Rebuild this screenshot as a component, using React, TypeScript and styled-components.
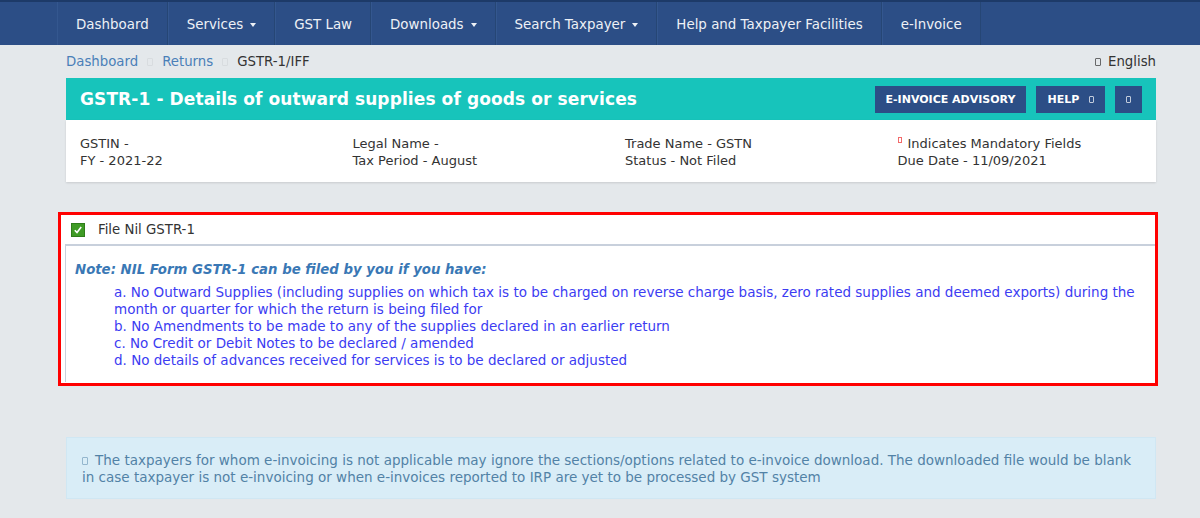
import React from 'react'
import styled, { createGlobalStyle } from 'styled-components'

const GlobalStyle = createGlobalStyle`
  html, body {
    margin: 0;
    padding: 0;
    background: #e4e8eb;
    font-family: 'DejaVu Sans', Verdana, sans-serif;
    font-size: 13.3px;
    color: #333;
  }
  * { box-sizing: border-box; }
`

const Page = styled.div`
  width: 1200px;
  min-height: 518px;
  overflow: hidden;
`

const NavBar = styled.nav`
  height: 45px;
  background: #2c4e86;
  border-top: 2px solid #1d3a68;
  display: flex;
  padding-left: 57px;
`

const NavItem = styled.div`
  display: flex;
  align-items: center;
  gap: 7px;
  padding: 1px 18px 0;
  color: #eef1f6;
  font-size: 13.4px;
  border-right: 1px solid #264675;
  border-left: 1px solid #34578f;
`

const Caret = styled.span`
  width: 0;
  height: 0;
  border-left: 3.5px solid transparent;
  border-right: 3.5px solid transparent;
  border-top: 4px solid #eef1f6;
  margin-top: 2px;
`

const Container = styled.div`
  width: 1090px;
  margin-left: 66px;
`

const Crumbs = styled.div`
  height: 33px;
  display: flex;
  align-items: center;
  justify-content: space-between;
`

const CrumbList = styled.div`
  display: flex;
  align-items: center;
  gap: 9px;
`

const CrumbLink = styled.span`
  color: #4a7fb8;
`

const Tofu = styled.span<{ $light?: boolean; $size?: number }>`
  display: inline-block;
  width: ${({ $size }) => ($size ? $size * 0.7 : 6)}px;
  height: ${({ $size }) => $size || 8}px;
  border: 1px solid ${({ $light }) => ($light ? '#d8dcdf' : 'currentColor')};
  border-radius: 1px;
  opacity: ${({ $light }) => ($light ? 1 : 0.7)};
`

const Lang = styled.span`
  display: flex;
  align-items: center;
  gap: 7px;
  color: #333;
`

const TitleBar = styled.div`
  height: 42px;
  background: #17c4bb;
  display: flex;
  align-items: center;
  justify-content: space-between;
  padding: 0 14px;
`

const Title = styled.h1`
  margin: 0;
  font-size: 17px;
  font-weight: bold;
  color: #fff;
  letter-spacing: 0.1px;
`

const Actions = styled.div`
  display: flex;
  gap: 10px;
`

const ActionButton = styled.button`
  height: 27px;
  background: #2c4e86;
  border: none;
  color: #fff;
  font-family: inherit;
  font-size: 11px;
  font-weight: bold;
  padding: 0 11px;
  display: flex;
  align-items: center;
  gap: 10px;
`

const InfoCard = styled.div`
  background: #fff;
  display: grid;
  grid-template-columns: repeat(4, 1fr);
  padding: 15px 0 13px;
  box-shadow: 0 1px 2px rgba(0, 0, 0, 0.12);
`

const InfoCol = styled.div`
  padding-left: 14px;
  line-height: 17px;
  font-size: 13px;
`

const Star = styled.span`
  display: inline-block;
  width: 4px;
  height: 6px;
  border: 1px solid #f26b6b;
  margin-right: 6px;
  vertical-align: 5px;
`

const Highlight = styled.div`
  margin: 30px 0 0 58px;
  width: 1100px;
  border: 3px solid #ff0000;
  background: #fff;
  padding: 0 0 1px 4px;
`

const CheckRow = styled.label`
  height: 29px;
  display: flex;
  align-items: center;
  gap: 13px;
  padding-left: 6px;
  color: #333;
`

const Check = styled.span`
  width: 14px;
  height: 14px;
  background: #3f9b25;
  border: 1px solid #2f7d1a;
  display: flex;
  align-items: center;
  justify-content: center;
`

const NotePanel = styled.div`
  border-top: 2px solid #c8d0dc;
  border-left: 1px solid #c8d0dc;
  padding: 15px 8px 13px 9px;
`

const NoteHead = styled.div`
  color: #3a78b5;
  font-weight: bold;
  font-style: italic;
  line-height: 17px;
  margin-bottom: 6px;
`

const NoteList = styled.div`
  padding-left: 39px;
  color: #3c3cf2;
  line-height: 17px;
  font-size: 13.5px;
`

const Alert = styled.div`
  margin-top: 51px;
  background: #d9edf7;
  border: 1px solid #d0e7f3;
  color: #5282a6;
  padding: 14px 15px 12px 15px;
  line-height: 17px;
  font-size: 13.5px;
`

const NAV = [
  { label: 'Dashboard' },
  { label: 'Services', caret: true },
  { label: 'GST Law' },
  { label: 'Downloads', caret: true },
  { label: 'Search Taxpayer', caret: true },
  { label: 'Help and Taxpayer Facilities' },
  { label: 'e-Invoice' },
]

const NOTES = [
  'a. No Outward Supplies (including supplies on which tax is to be charged on reverse charge basis, zero rated supplies and deemed exports) during the month or quarter for which the return is being filed for',
  'b. No Amendments to be made to any of the supplies declared in an earlier return',
  'c. No Credit or Debit Notes to be declared / amended',
  'd. No details of advances received for services is to be declared or adjusted',
]

const App = () => (
  <Page>
    <GlobalStyle />
    <NavBar>
      {NAV.map((item) => (
        <NavItem key={item.label}>
          {item.label}
          {item.caret && <Caret />}
        </NavItem>
      ))}
    </NavBar>

    <Container>
      <Crumbs>
        <CrumbList>
          <CrumbLink>Dashboard</CrumbLink>
          <Tofu $light />
          <CrumbLink>Returns</CrumbLink>
          <Tofu $light />
          <span>GSTR-1/IFF</span>
        </CrumbList>
        <Lang>
          <Tofu />
          English
        </Lang>
      </Crumbs>

      <TitleBar>
        <Title>GSTR-1 - Details of outward supplies of goods or services</Title>
        <Actions>
          <ActionButton>E-INVOICE ADVISORY</ActionButton>
          <ActionButton>
            HELP <Tofu $size={7} />
          </ActionButton>
          <ActionButton>
            <Tofu $size={7} />
          </ActionButton>
        </Actions>
      </TitleBar>

      <InfoCard>
        <InfoCol>
          GSTIN -
          <br />
          FY - 2021-22
        </InfoCol>
        <InfoCol>
          Legal Name -
          <br />
          Tax Period - August
        </InfoCol>
        <InfoCol>
          Trade Name - GSTN
          <br />
          Status - Not Filed
        </InfoCol>
        <InfoCol>
          <Star />
          Indicates Mandatory Fields
          <br />
          Due Date - 11/09/2021
        </InfoCol>
      </InfoCard>
    </Container>

    <Highlight>
      <CheckRow>
        <Check>
          <svg width="10" height="10" viewBox="0 0 10 10">
            <path d="M1.8 5.2 L4 7.6 L8.2 2" fill="none" stroke="#fff" strokeWidth="1.6" />
          </svg>
        </Check>
        File Nil GSTR-1
      </CheckRow>
      <NotePanel>
        <NoteHead>Note: NIL Form GSTR-1 can be filed by you if you have:</NoteHead>
        <NoteList>
          {NOTES.map((n) => (
            <div key={n}>{n}</div>
          ))}
        </NoteList>
      </NotePanel>
    </Highlight>

    <Container>
      <Alert>
        <Tofu $light={false} style={{ opacity: 0.5, marginRight: 7 }} />
        The taxpayers for whom e-invoicing is not applicable may ignore the sections/options related to e-invoice
        download. The downloaded file would be blank in case taxpayer is not e-invoicing or when e-invoices reported to
        IRP are yet to be processed by GST system
      </Alert>
    </Container>
  </Page>
)

export default App
